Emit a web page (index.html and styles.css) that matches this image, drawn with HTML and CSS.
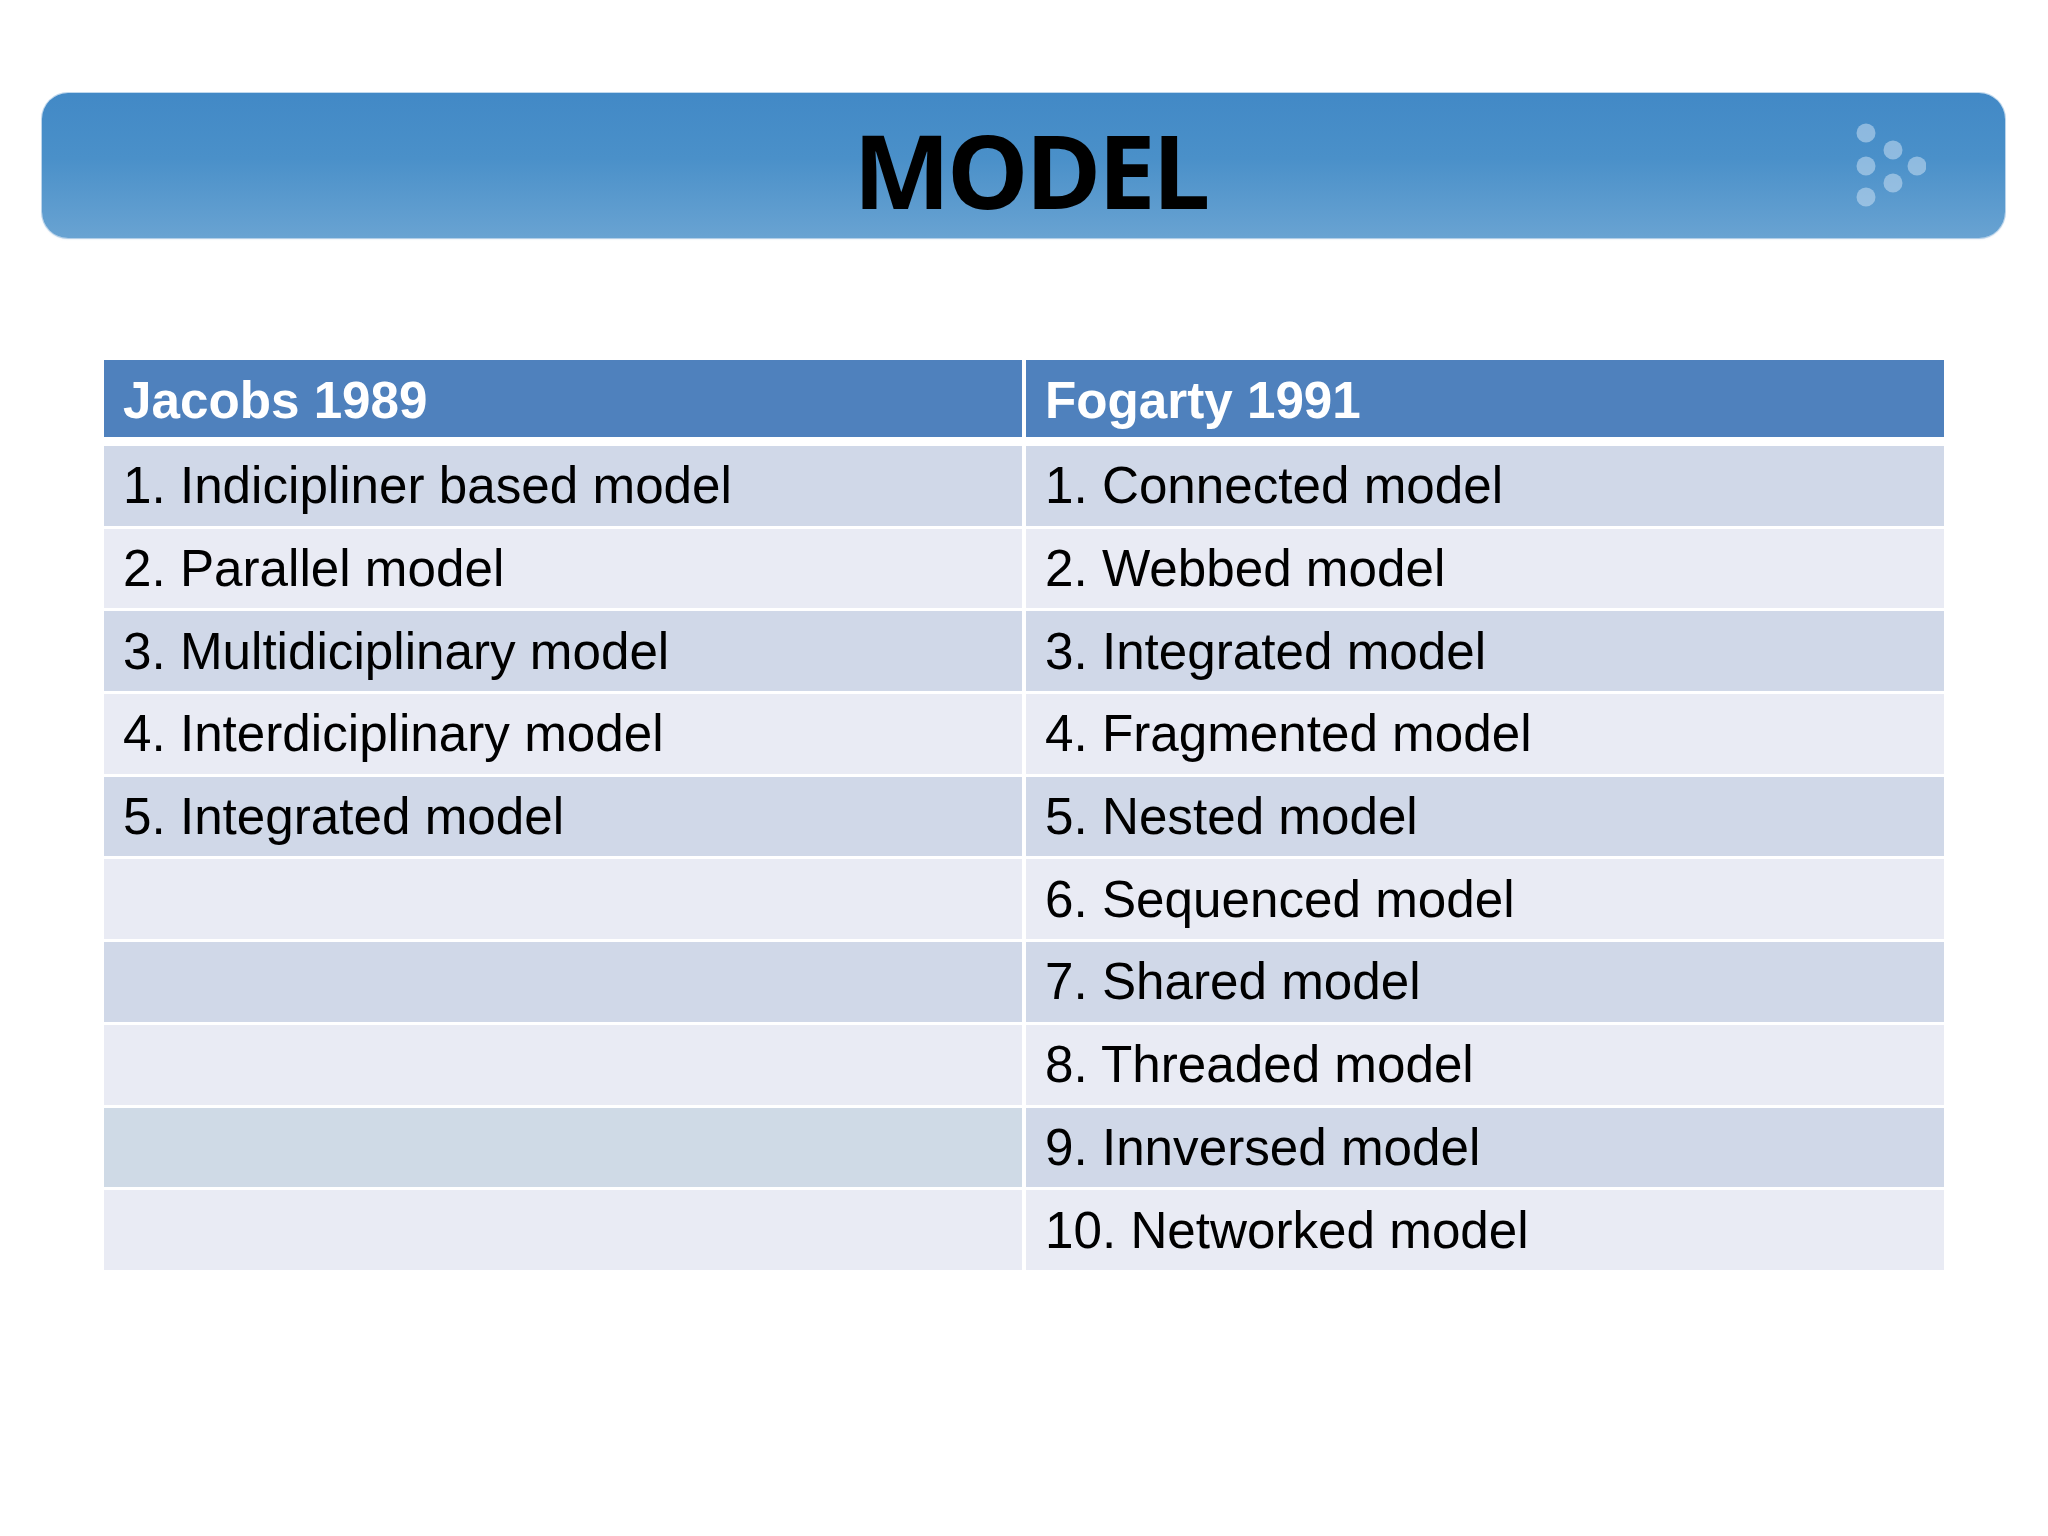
FILE: index.html
```html
<!DOCTYPE html>
<html lang="en">
<head>
<meta charset="utf-8">
<title>MODEL</title>
<link rel="stylesheet" href="styles.css">
</head>
<body>
<div class="slide">
  <header class="title-bar">
    <h1 class="title">MODEL</h1>
    <svg class="dots" width="70" height="84" viewBox="0 0 70 84" aria-hidden="true">
      <circle cx="10" cy="10" r="9.5"/>
      <circle cx="37" cy="27" r="9.5"/>
      <circle cx="10" cy="43" r="9.5"/>
      <circle cx="61" cy="43" r="9.5"/>
      <circle cx="37" cy="60" r="9.5"/>
      <circle cx="10" cy="74" r="9.5"/>
    </svg>
  </header>

  <div class="table">
    <div class="cell head">Jacobs 1989</div>
    <div class="cell head">Fogarty 1991</div>

    <div class="cell odd">1. Indicipliner based model</div>
    <div class="cell odd">1. Connected model</div>

    <div class="cell even">2. Parallel model</div>
    <div class="cell even">2. Webbed model</div>

    <div class="cell odd">3. Multidiciplinary model</div>
    <div class="cell odd">3. Integrated model</div>

    <div class="cell even">4. Interdiciplinary model</div>
    <div class="cell even">4. Fragmented model</div>

    <div class="cell odd">5. Integrated model</div>
    <div class="cell odd">5. Nested model</div>

    <div class="cell even"></div>
    <div class="cell even">6. Sequenced model</div>

    <div class="cell odd"></div>
    <div class="cell odd">7. Shared model</div>

    <div class="cell even"></div>
    <div class="cell even">8. Threaded model</div>

    <div class="cell odd alt"></div>
    <div class="cell odd">9. Innversed model</div>

    <div class="cell even"></div>
    <div class="cell even">10. Networked model</div>
  </div>
</div>
</body>
</html>
```

FILE: styles.css
```css
html, body {
  margin: 0;
  padding: 0;
  background: #ffffff;
}

.slide {
  width: 2048px;
  height: 1536px;
  box-sizing: border-box;
  padding: 93px 43px 0 42px;
  background: #ffffff;
  font-family: "Liberation Sans", Arial, sans-serif;
}

.title-bar {
  position: relative;
  height: 145px;
  border-radius: 26px;
  background: linear-gradient(to bottom, #4289c6 0%, #4a90c9 45%, #69a3d2 100%);
  box-shadow: 0 0 0 1px rgba(150, 190, 225, 0.6), 0 1px 2px rgba(120, 160, 200, 0.35);
  display: flex;
  justify-content: center;
  align-items: flex-start;
}

.title {
  margin: 0;
  padding: 25px 0 0 13px;
  font-family: "Open Sans", "Liberation Sans", sans-serif;
  font-weight: 700;
  font-size: 103px;
  line-height: 1;
  letter-spacing: -3.5px;
  color: #000000;
}

.dots {
  position: absolute;
  left: 1814px;
  top: 30px;
  fill: rgba(200, 222, 242, 0.55);
}

.table {
  margin: 122px 61px 0 62px;
  display: grid;
  grid-template-columns: 918px 918px;
  grid-template-rows: 83px repeat(10, 79.7px);
  column-gap: 4px;
  row-gap: 3px;
}

.cell {
  display: flex;
  align-items: center;
  padding: 0 0 0 19px;
  font-size: 51.2px;
  color: #000000;
  white-space: nowrap;
}

.head {
  background: #4f81bd;
  color: #ffffff;
  font-weight: 700;
  margin-bottom: 6px;
  padding-top: 3px;
}

.odd {
  background: #d0d8e8;
}

.alt {
  background: #cfdae6;
}

.even {
  background: #e9ebf4;
}
```
